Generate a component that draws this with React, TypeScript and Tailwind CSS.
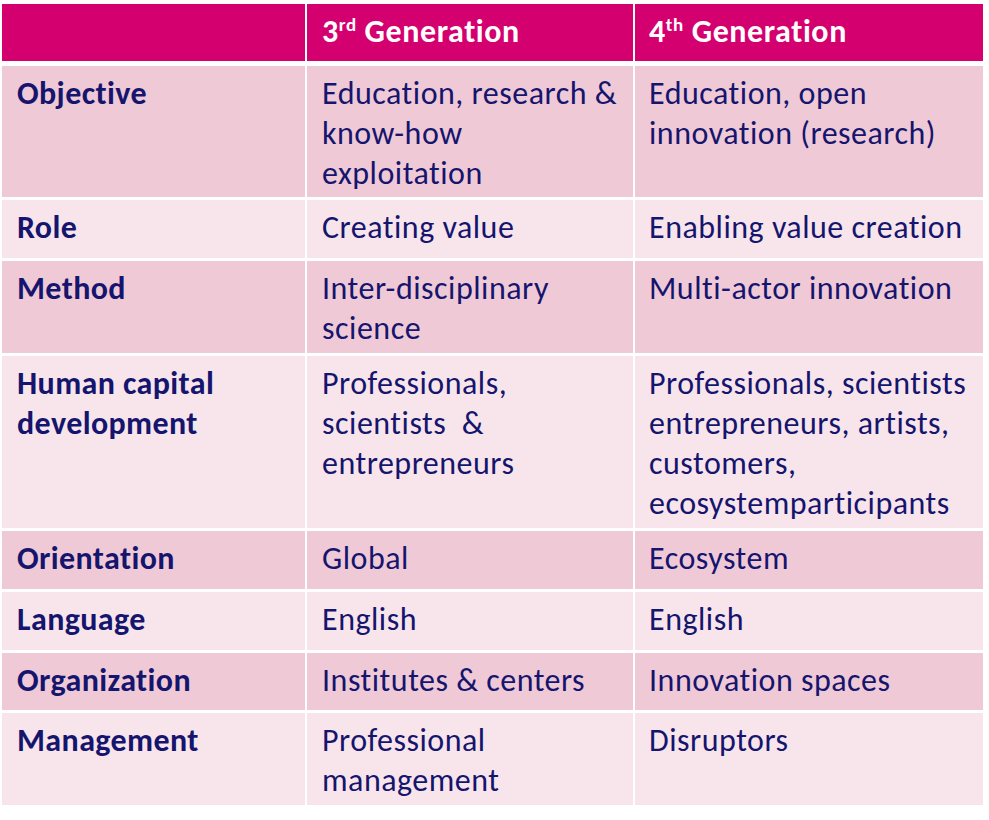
import React from "react";

type Row = { label: React.ReactNode; a: React.ReactNode; b: React.ReactNode; h: number; dark: boolean };

const rows: Row[] = [
  { label: "Objective", a: <>Education, research &amp;<br />know-how<br />exploitation</>, b: <>Education, open<br />innovation (research)</>, h: 131, dark: true },
  { label: "Role", a: "Creating value", b: "Enabling value creation", h: 58, dark: false },
  { label: "Method", a: <>Inter-disciplinary<br />science</>, b: "Multi-actor innovation", h: 92, dark: true },
  { label: <>Human capital<br />development</>, a: <>Professionals,<br />scientists&nbsp; &amp;<br />entrepreneurs</>, b: <>Professionals, scientists<br />entrepreneurs, artists,<br />customers,<br />ecosystemparticipants</>, h: 172, dark: false },
  { label: "Orientation", a: "Global", b: "Ecosystem", h: 58, dark: true },
  { label: "Language", a: "English", b: "English", h: 58, dark: false },
  { label: "Organization", a: "Institutes & centers", b: "Innovation spaces", h: 57, dark: true },
  { label: "Management", a: <>Professional<br />management</>, b: "Disruptors", h: 92, dark: false },
];

export default function App() {
  const font = { fontFamily: "Carlito, Calibri, Lato, 'Liberation Sans', sans-serif" };
  return (
    <div className="w-[989px] h-[820px] bg-white pt-[4px] pl-[2px]" style={font}>
      <div className="flex flex-col w-[981px]">
        <div className="grid grid-cols-[303px_326px_348px] gap-x-[2px] h-[57px] mb-[5px]">
          <div className="bg-[#d5006f]" />
          <div className="bg-[#d5006f] pl-[15px] pt-[8px] text-white font-bold text-[32px] tracking-[0.6px] leading-[40px] whitespace-nowrap">
            3<span className="text-[19px] relative -top-[11px] leading-none">rd</span> Generation
          </div>
          <div className="bg-[#d5006f] pl-[14px] pt-[8px] text-white font-bold text-[32px] tracking-[0.6px] leading-[40px] whitespace-nowrap">
            4<span className="text-[19px] relative -top-[11px] leading-none">th</span> Generation
          </div>
        </div>
        <div className="flex flex-col gap-y-[3px]">
          {rows.map((r, i) => {
            const bg = r.dark ? "bg-[#f0c9d7]" : "bg-[#f8e5ec]";
            return (
              <div key={i} className="grid grid-cols-[303px_326px_348px] gap-x-[2px]" style={{ height: r.h }}>
                <div className={`${bg} pl-[15px] pt-[8px] text-[#15156e] font-bold text-[32px] tracking-[0.4px] leading-[40px] whitespace-nowrap`}>{r.label}</div>
                <div className={`${bg} pl-[15px] pt-[8px] text-[#15156e] text-[32px] tracking-[0.5px] leading-[40px] whitespace-nowrap`}>{r.a}</div>
                <div className={`${bg} pl-[14px] pt-[8px] text-[#15156e] text-[32px] tracking-[0.5px] leading-[40px] whitespace-nowrap`}>{r.b}</div>
              </div>
            );
          })}
        </div>
      </div>
    </div>
  );
}
